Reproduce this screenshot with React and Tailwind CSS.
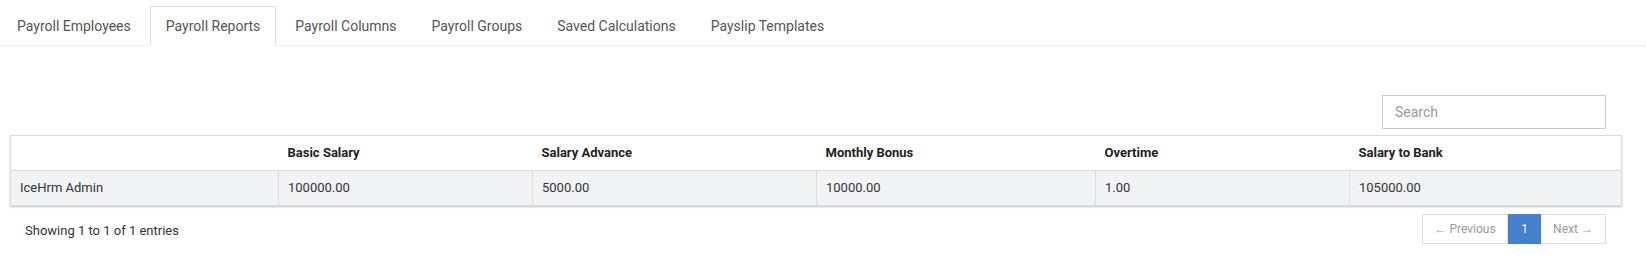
const TABS = [
  'Payroll Employees',
  'Payroll Reports',
  'Payroll Columns',
  'Payroll Groups',
  'Saved Calculations',
  'Payslip Templates',
];

const COLUMNS = [
  { label: '', width: 268 },
  { label: 'Basic Salary', width: 254 },
  { label: 'Salary Advance', width: 284 },
  { label: 'Monthly Bonus', width: 279 },
  { label: 'Overtime', width: 254 },
  { label: 'Salary to Bank', width: 272 },
];

const ROWS = [['IceHrm Admin', '100000.00', '5000.00', '10000.00', '1.00', '105000.00']];

export default function App() {
  const active = 'Payroll Reports';

  return (
    <div className="h-[274px] w-full bg-white font-['Roboto','Liberation_Sans',sans-serif] text-[#333]">
      <ul className="flex border-b border-[#eee] pl-px pt-[6px]">
        {TABS.map((tab) => (
          <li
            key={tab}
            className={`-mb-px mr-[3px] border px-[15px] py-[9px] text-[14px] leading-[20px] ${
              tab === active ? 'border-[#ddd] border-b-white bg-white text-[#555]' : 'border-transparent text-[#555]'
            }`}
          >
            {tab}
          </li>
        ))}
      </ul>

      <div className="ml-[10px] mr-[25px]">
        <div className="mt-[49px] flex justify-end px-[15px]">
          <input
            placeholder="Search"
            className="h-[34px] w-[224px] border border-[#ccc] px-[12px] text-[14px] text-[#555] outline-none placeholder:text-[#999]"
          />
        </div>

        <table className="mt-[6px] w-full table-fixed border-collapse border border-[#ddd] text-[13px] shadow-[0_1px_2px_rgba(0,0,0,0.25)]">
          <colgroup>
            {COLUMNS.map((c, i) => (
              <col key={i} style={{ width: c.width }} />
            ))}
          </colgroup>
          <thead>
            <tr className="bg-white">
              {COLUMNS.map((c, i) => (
                <th key={i} className="h-[35px] border-b border-[#ddd] px-[9px] text-left font-bold text-[#222]">
                  {c.label}
                </th>
              ))}
            </tr>
          </thead>
          <tbody>
            {ROWS.map((row, r) => (
              <tr key={r} className="bg-[#f2f3f5]">
                {row.map((cell, i) => (
                  <td key={i} className="h-[35px] border border-[#ddd] px-[9px] text-[#333]">
                    {cell}
                  </td>
                ))}
              </tr>
            ))}
          </tbody>
        </table>

        <div className="mt-[8px] flex items-center justify-between px-[15px]">
          <div className="mt-[3px] text-[13px] text-[#333]">Showing 1 to 1 of 1 entries</div>
          <div className="flex h-[30px] text-[12px]">
            <span className="flex w-[86px] items-center justify-center border border-[#ddd] text-[#999]">
              ← Previous
            </span>
            <span className="flex w-[33px] items-center justify-center border border-[#4480cb] bg-[#4480cb] text-white">
              1
            </span>
            <span className="flex w-[65px] items-center justify-center border border-l-0 border-[#ddd] text-[#999]">
              Next →
            </span>
          </div>
        </div>
      </div>
    </div>
  );
}
